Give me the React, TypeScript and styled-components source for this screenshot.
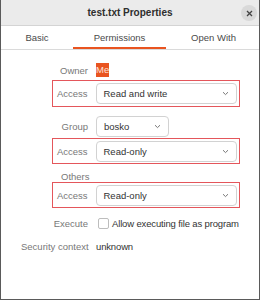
import React from 'react';
import styled, { createGlobalStyle } from 'styled-components';

const GlobalStyle = createGlobalStyle`
  html, body {
    margin: 0;
    padding: 0;
    background: #ffffff;
  }
  body {
    font-family: "Liberation Sans", "Noto Sans", sans-serif;
    font-size: 9.5px;
    color: #3d3d3d;
  }
`;

const Window = styled.div`
  width: 260px;
  height: 300px;
  box-sizing: border-box;
  border: 1px solid #5a5a5a;
  border-top: none;
  background: #ffffff;
  display: flex;
  flex-direction: column;
  overflow: hidden;
`;

const Header = styled.div`
  height: 26px;
  flex: none;
  background: #ebebeb;
  border-bottom: 1px solid #d4d4d4;
  box-sizing: border-box;
  display: flex;
  align-items: center;
  justify-content: center;
  position: relative;
`;

const Title = styled.div`
  font-weight: 700;
  font-size: 10px;
  color: #2e2e2e;
`;

const CloseButton = styled.div`
  position: absolute;
  right: 2px;
  top: 5px;
  width: 16px;
  height: 16px;
  border-radius: 50%;
  background: #d9d9d9;
  display: flex;
  align-items: center;
  justify-content: center;
`;

const Tabs = styled.div`
  height: 24px;
  flex: none;
  display: flex;
  border-bottom: 1px solid #dadada;
  box-sizing: border-box;
`;

const Tab = styled.div<{ $width: number; $active?: boolean }>`
  width: ${(p) => p.$width}px;
  flex: none;
  display: flex;
  align-items: center;
  justify-content: center;
  color: #4a4a4a;
  font-size: 9.5px;
  box-sizing: border-box;
  padding-top: 1px;
  border-bottom: 2px solid ${(p) => (p.$active ? '#e95420' : 'transparent')};
`;

const Body = styled.div`
  display: flex;
  flex-direction: column;
  padding: 0 19px 0 20px;
`;

const Row = styled.div<{ $height: number; $top: number; $boxed?: boolean }>`
  display: flex;
  align-items: center;
  gap: 8px;
  height: ${(p) => p.$height}px;
  margin-top: ${(p) => p.$top}px;
  box-sizing: border-box;
  white-space: nowrap;
  ${(p) =>
    p.$boxed
      ? `
    margin-left: 31px;
    border: 1.5px solid #e4565b;
    padding-right: 2.5px;
  `
      : ''}
`;

const Label = styled.div<{ $boxed?: boolean }>`
  width: ${(p) => (p.$boxed ? 34.5 : 67)}px;
  flex: none;
  text-align: right;
  color: #787878;
`;

const SectionLabel = styled.div`
  margin-top: 7px;
  margin-left: 40px;
  height: 11px;
  line-height: 11px;
  color: #787878;
`;

const Value = styled.span`
  color: #333333;
  letter-spacing: -0.15px;
`;

const Selected = styled.span`
  background: #e95420;
  color: #fde3d8;
  padding: 1px 0;
  line-height: 12px;
`;

const Dropdown = styled.div<{ $width?: number }>`
  ${(p) => (p.$width ? `width: ${p.$width}px;` : 'flex: 1;')}
  height: 21px;
  box-sizing: border-box;
  border: 1px solid #d2d2d2;
  border-radius: 4px;
  background: #ffffff;
  display: flex;
  align-items: center;
  justify-content: space-between;
  padding: 0 7px 0 7px;
  color: #333333;
`;

const Checkbox = styled.div`
  width: 11px;
  height: 11px;
  flex: none;
  box-sizing: border-box;
  border: 1px solid #bdbdbd;
  border-radius: 2px;
  background: #ffffff;
  margin-left: 2px;
  margin-right: -5px;
`;

const Chevron = () => (
  <svg width="7" height="5" viewBox="0 0 7 5">
    <path d="M1 1.2 L3.5 3.6 L6 1.2" fill="none" stroke="#777" strokeWidth="1" />
  </svg>
);

const CloseIcon = () => (
  <svg width="7" height="7" viewBox="0 0 7 7">
    <path d="M1 1 L6 6 M6 1 L1 6" stroke="#444" strokeWidth="1.3" />
  </svg>
);

const Select: React.FC<{ value: string; width?: number }> = ({ value, width }) => (
  <Dropdown $width={width}>
    <span>{value}</span>
    <Chevron />
  </Dropdown>
);

export default function App() {
  return (
    <>
      <GlobalStyle />
      <Window>
        <Header>
          <Title>test.txt Properties</Title>
          <CloseButton>
            <CloseIcon />
          </CloseButton>
        </Header>
        <Tabs>
          <Tab $width={72}>Basic</Tab>
          <Tab $width={93} $active>
            Permissions
          </Tab>
          <Tab $width={95}>Open With</Tab>
        </Tabs>
        <Body>
          <Row $height={16} $top={12}>
            <Label>Owner</Label>
            <Selected>Me</Selected>
          </Row>
          <Row $height={27} $top={2} $boxed>
            <Label $boxed>Access</Label>
            <Select value="Read and write" />
          </Row>
          <Row $height={20} $top={9}>
            <Label>Group</Label>
            <Select value="bosko" width={73} />
          </Row>
          <Row $height={26} $top={2} $boxed>
            <Label $boxed>Access</Label>
            <Select value="Read-only" />
          </Row>
          <SectionLabel>Others</SectionLabel>
          <Row $height={26} $top={0} $boxed>
            <Label $boxed>Access</Label>
            <Select value="Read-only" />
          </Row>
          <Row $height={14} $top={8}>
            <Label>Execute</Label>
            <Checkbox />
            <Value>Allow executing file as program</Value>
          </Row>
          <Row $height={12} $top={10}>
            <Label>Security context</Label>
            <Value>unknown</Value>
          </Row>
        </Body>
      </Window>
    </>
  );
}
